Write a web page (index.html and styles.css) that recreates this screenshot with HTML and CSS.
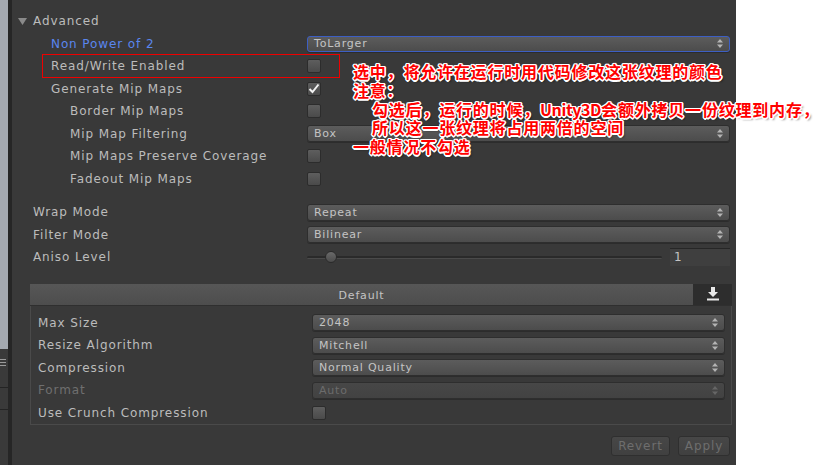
FILE: index.html
```html
<!DOCTYPE html>
<html lang="zh-CN">
<head>
    <meta charset="UTF-8">
    <title>Texture Import Settings</title>
    <link rel="stylesheet" href="styles.css">
</head>
<body>
    <div class="window">
        <div class="side">
            <div class="side-top"></div>
            <div class="side-bottom">
                <svg class="side-menu" width="6" height="7" viewBox="0 0 6 7"><rect y="0" width="6" height="1"/><rect y="3" width="6" height="1"/><rect y="6" width="6" height="1"/></svg>
                <div class="side-line"></div>
                <div class="side-line"></div>
            </div>
        </div>
        <div class="divider"></div>

        <div class="inspector">
            <div class="row">
                <div class="label foldout">
                    <svg class="fold-arrow" width="9" height="7" viewBox="0 0 9 7"><path d="M0 0H9L4.5 7Z"/></svg>
                    Advanced
                </div>
            </div>
            <div class="row">
                <div class="label indent-1 label-blue">Non Power of 2</div>
                <div class="control">
                    <div class="popup focused">ToLarger
                        <svg class="popup-arrows" width="6" height="9" viewBox="0 0 6 9"><path d="M3 0L6 3.5H0Z M0 5.5H6L3 9Z"/></svg>
                    </div>
                </div>
            </div>
            <div class="row">
                <div class="label indent-1">Read/Write Enabled</div>
                <div class="control"><div class="checkbox"></div></div>
            </div>
            <div class="row">
                <div class="label indent-1">Generate Mip Maps</div>
                <div class="control">
                    <div class="checkbox">
                        <svg width="12" height="11" viewBox="0 0 12 11"><path class="tick" d="M1.5 6L4.5 9L10.5 1.5"/></svg>
                    </div>
                </div>
            </div>
            <div class="row">
                <div class="label indent-2">Border Mip Maps</div>
                <div class="control"><div class="checkbox"></div></div>
            </div>
            <div class="row">
                <div class="label indent-2">Mip Map Filtering</div>
                <div class="control">
                    <div class="popup">Box
                        <svg class="popup-arrows" width="6" height="9" viewBox="0 0 6 9"><path d="M3 0L6 3.5H0Z M0 5.5H6L3 9Z"/></svg>
                    </div>
                </div>
            </div>
            <div class="row">
                <div class="label indent-2">Mip Maps Preserve Coverage</div>
                <div class="control"><div class="checkbox"></div></div>
            </div>
            <div class="row">
                <div class="label indent-2">Fadeout Mip Maps</div>
                <div class="control"><div class="checkbox"></div></div>
            </div>

            <div class="row group-start">
                <div class="label">Wrap Mode</div>
                <div class="control">
                    <div class="popup">Repeat
                        <svg class="popup-arrows" width="6" height="9" viewBox="0 0 6 9"><path d="M3 0L6 3.5H0Z M0 5.5H6L3 9Z"/></svg>
                    </div>
                </div>
            </div>
            <div class="row">
                <div class="label">Filter Mode</div>
                <div class="control">
                    <div class="popup">Bilinear
                        <svg class="popup-arrows" width="6" height="9" viewBox="0 0 6 9"><path d="M3 0L6 3.5H0Z M0 5.5H6L3 9Z"/></svg>
                    </div>
                </div>
            </div>
            <div class="row">
                <div class="label">Aniso Level</div>
                <div class="control slider-control">
                    <div class="slider">
                        <div class="slider-track"></div>
                        <div class="slider-thumb"></div>
                    </div>
                    <div class="number-field">1</div>
                </div>
            </div>

            <div class="platform">
                <div class="platform-tabs">
                    <div class="tab">Default</div>
                    <div class="tab-icon">
                        <svg width="14" height="14" viewBox="0 0 14 14"><path d="M5 0H9V5H12L7 10L2 5H5Z"/><rect x="1" y="11.5" width="12" height="2"/></svg>
                    </div>
                </div>
                <div class="platform-body">
                    <div class="row">
                        <div class="label">Max Size</div>
                        <div class="control">
                            <div class="popup">2048
                                <svg class="popup-arrows" width="6" height="9" viewBox="0 0 6 9"><path d="M3 0L6 3.5H0Z M0 5.5H6L3 9Z"/></svg>
                            </div>
                        </div>
                    </div>
                    <div class="row">
                        <div class="label">Resize Algorithm</div>
                        <div class="control">
                            <div class="popup">Mitchell
                                <svg class="popup-arrows" width="6" height="9" viewBox="0 0 6 9"><path d="M3 0L6 3.5H0Z M0 5.5H6L3 9Z"/></svg>
                            </div>
                        </div>
                    </div>
                    <div class="row">
                        <div class="label">Compression</div>
                        <div class="control">
                            <div class="popup">Normal Quality
                                <svg class="popup-arrows" width="6" height="9" viewBox="0 0 6 9"><path d="M3 0L6 3.5H0Z M0 5.5H6L3 9Z"/></svg>
                            </div>
                        </div>
                    </div>
                    <div class="row">
                        <div class="label disabled">Format</div>
                        <div class="control">
                            <div class="popup disabled">Auto
                                <svg class="popup-arrows" width="6" height="9" viewBox="0 0 6 9"><path d="M3 0L6 3.5H0Z M0 5.5H6L3 9Z"/></svg>
                            </div>
                        </div>
                    </div>
                    <div class="row">
                        <div class="label">Use Crunch Compression</div>
                        <div class="control"><div class="checkbox"></div></div>
                    </div>
                </div>
            </div>

            <div class="actions">
                <button class="btn revert">Revert</button>
                <button class="btn apply">Apply</button>
            </div>
        </div>

        <div class="blank"></div>

        <!-- notes drawn on top of the inspector -->
        <div class="note-box"></div>
        <div class="note">
            <div>选中，将允许在运行时用代码修改这张纹理的颜色</div>
            <div>注意：</div>
            <div class="note-indent">勾选后，运行的时候，<span class="latin">Unity3D</span>会额外拷贝一份纹理到内存，</div>
            <div class="note-indent">所以这一张纹理将占用两倍的空间</div>
            <div>一般情况不勾选</div>
        </div>
    </div>
</body>
</html>
```

FILE: styles.css
```css
* {
    margin: 0;
    padding: 0;
    box-sizing: border-box;
}

body {
    background: #ffffff;
    font-family: 'DejaVu Sans', 'Liberation Sans', sans-serif;
}

.window {
    position: relative;
    display: flex;
    width: 827px;
    height: 465px;
    overflow: hidden;
}

/* neighbouring panel on the left */
.side {
    width: 8px;
    display: flex;
    flex-direction: column;
}

.side-top {
    height: 349px;
    background: #a4a9b0;
}

.side-bottom {
    flex: 1;
    background: #3a3a3a;
    padding-top: 10px;
}

.side-menu {
    display: block;
    fill: #9a9a9a;
}

.side-line {
    height: 1px;
    background: #242424;
    margin-top: 21px;
}

.divider {
    width: 4px;
    background: #262626;
}

.inspector {
    width: 724px;
    background: #393939;
    padding: 10px 6px 0 0;
    color: #bcbcbc;
    font-size: 12px;
    letter-spacing: 0.9px;
}

.blank {
    flex: 1;
    background: #ffffff;
}

.row {
    display: grid;
    grid-template-columns: 295px 1fr;
    align-items: center;
    height: 22.5px;
}

.group-start {
    margin-top: 11px;
}

.label {
    padding-left: 21px;
    white-space: nowrap;
}

.foldout {
    display: flex;
    align-items: center;
    gap: 6px;
    padding-left: 6px;
}

.fold-arrow {
    fill: #8a8a8a;
}

.indent-1 {
    padding-left: 39px;
}

.indent-2 {
    padding-left: 58px;
}

.label-blue {
    color: #5a86ee;
}

.label.disabled {
    color: #6f6f6f;
}

.control {
    display: flex;
    align-items: center;
}

/* popup fields */
.popup {
    flex: 1;
    height: 17px;
    display: flex;
    align-items: center;
    justify-content: space-between;
    padding: 0 6px 0 6px;
    border: 1px solid #2e2e2e;
    border-radius: 3px;
    background: linear-gradient(#5c5c5c, #4c4c4c);
    box-shadow: 0 1px 0 #2c2c2c;
    color: #c4c4c4;
    font-size: 11px;
    letter-spacing: 0.8px;
}

.popup.focused {
    border-color: #3d5fc4;
    height: 16px;
}

.popup.disabled {
    background: linear-gradient(#474747, #424242);
    color: #6c6c6c;
}

.popup-arrows {
    fill: #b4b4b4;
}

.popup.disabled .popup-arrows {
    fill: #666666;
}

.checkbox {
    width: 14px;
    height: 14px;
    border: 1px solid #2c2c2c;
    border-radius: 2px;
    background: linear-gradient(#5e5e5e, #4a4a4a);
    display: flex;
    align-items: center;
    justify-content: center;
}

.tick {
    fill: none;
    stroke: #f2f2f2;
    stroke-width: 2;
}

/* aniso slider */
.slider-control {
    gap: 8px;
}

.slider {
    position: relative;
    flex: 1;
    height: 14px;
    display: flex;
    align-items: center;
}

.slider-track {
    width: 100%;
    height: 3px;
    background: #2a2a2a;
    border-bottom: 1px solid #4a4a4a;
    border-radius: 2px;
}

.slider-thumb {
    position: absolute;
    left: 18px;
    top: 1px;
    width: 12px;
    height: 12px;
    border-radius: 50%;
    border: 1px solid #2a2a2a;
    background: linear-gradient(#6a6a6a, #4c4c4c);
}

.number-field {
    width: 60px;
    height: 18px;
    background: #3f3f3f;
    border-top: 1px solid #262626;
    padding-left: 4px;
    line-height: 17px;
    color: #c4c4c4;
    font-size: 12px;
}

/* platform settings box */
.platform {
    margin: 15px -2px 0 18px;
}

.platform-tabs {
    display: flex;
    height: 22px;
    background: linear-gradient(#575757, #4d4d4d);
    border-bottom: 1px solid #2f2f2f;
}

.tab {
    flex: 1;
    text-align: center;
    line-height: 23px;
    font-size: 11px;
    letter-spacing: 0.8px;
    color: #c4c4c4;
}

.tab-icon {
    width: 39px;
    background: #2d2d2d;
    display: flex;
    align-items: center;
    justify-content: center;
    fill: #e8e8e8;
}

.platform-body {
    border: 1px solid #4a4a4a;
    border-top: none;
    padding: 6px 6px 0 7px;
}

.platform-body .row {
    grid-template-columns: 274px 1fr;
}

.platform-body .label {
    padding-left: 0;
}

.actions {
    display: flex;
    justify-content: flex-end;
    gap: 8px;
    margin-top: 11px;
}

.btn {
    height: 20px;
    padding: 0 5px;
    border: 1px solid #2f2f2f;
    border-radius: 3px;
    background: linear-gradient(#474747, #404040);
    color: #6e6e6e;
    font-family: 'DejaVu Sans', sans-serif;
    font-size: 12px;
    letter-spacing: 0.9px;
}

.revert {
    width: 59px;
}

.apply {
    width: 52px;
}

/* red annotations */
.note-box {
    position: absolute;
    left: 42px;
    top: 54px;
    width: 298px;
    height: 24px;
    border: 1px solid #ee0000;
}

.note {
    position: absolute;
    left: 353px;
    top: 62px;
    color: #ff0000;
    font-family: 'Noto Sans CJK SC', sans-serif;
    font-weight: 700;
    font-size: 16px;
    line-height: 18.75px;
    letter-spacing: 0.8px;
    white-space: nowrap;
    text-shadow:
        1.5px 0 0 #fff, -1.5px 0 0 #fff, 0 1.5px 0 #fff, 0 -1.5px 0 #fff,
        1px 1px 0 #fff, -1px -1px 0 #fff, 1px -1px 0 #fff, -1px 1px 0 #fff,
        2px 2px 2px rgba(0, 0, 0, 0.45);
}

.note .latin {
    letter-spacing: -0.4px;
}

.note-indent {
    padding-left: 19px;
}
```
